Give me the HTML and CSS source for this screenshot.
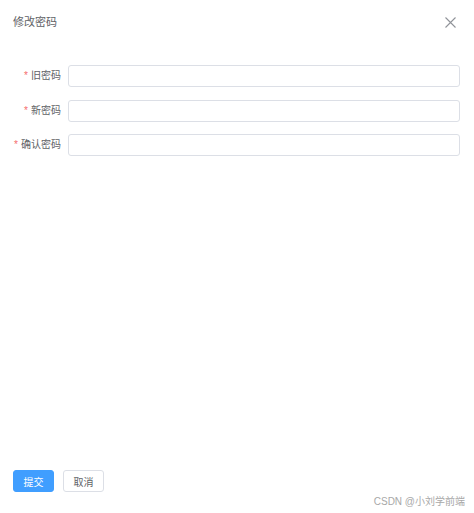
FILE: index.html
```html
<!DOCTYPE html>
<html lang="zh-CN">
<head>
<meta charset="utf-8">
<title>修改密码</title>
<link rel="stylesheet" href="styles.css">
</head>
<body>
<div class="dialog">
  <div class="header">
    <span class="title">修改密码</span>
    <button class="close" aria-label="关闭">
      <svg width="11" height="11" viewBox="0 0 11 11"><path d="M0.5 0.5L10.5 10.5M10.5 0.5L0.5 10.5" stroke="#909399" stroke-width="1.1" fill="none"/></svg>
    </button>
  </div>
  <form class="form">
    <div class="row">
      <label class="label"><span class="req">*</span>旧密码</label>
      <input class="input" type="password">
    </div>
    <div class="row">
      <label class="label"><span class="req">*</span>新密码</label>
      <input class="input" type="password">
    </div>
    <div class="row">
      <label class="label"><span class="req">*</span>确认密码</label>
      <input class="input" type="password">
    </div>
  </form>
  <div class="footer">
    <div class="buttons">
      <button class="btn primary" type="button">提交</button>
      <button class="btn" type="button">取消</button>
    </div>
    <div class="watermark">CSDN @小刘学前端</div>
  </div>
</div>
</body>
</html>
```
FILE: styles.css
```css
html, body {
  margin: 0;
  padding: 0;
  background: #ffffff;
}
body {
  font-family: "Liberation Sans", "Noto Sans CJK SC", sans-serif;
}
.dialog {
  height: 513px;
  display: flex;
  flex-direction: column;
  box-sizing: border-box;
}
.header {
  display: flex;
  justify-content: space-between;
  align-items: center;
  padding: 11px 18px 0 13px;
  height: 22px;
}
.title {
  font-size: 11px;
  line-height: 22px;
  color: #606266;
}
.close {
  border: 0;
  background: none;
  padding: 0;
  width: 11px;
  height: 11px;
  display: flex;
}
.form {
  margin: 32px 0 0 0;
  padding: 0 14px 0 0;
  display: flex;
  flex-direction: column;
  gap: 12.5px;
}
.row {
  display: flex;
  align-items: center;
  height: 22px;
}
.label {
  width: 68px;
  box-sizing: border-box;
  padding-right: 7px;
  text-align: right;
  font-size: 10px;
  color: #606266;
  line-height: 22px;
}
.req {
  color: #f56c6c;
  margin-right: 3px;
}
.input {
  flex: 1;
  height: 22px;
  box-sizing: border-box;
  border: 1px solid #dcdfe6;
  border-radius: 3px;
  margin: 0;
  padding: 0 8px;
  outline: none;
  background: #fff;
}
.footer {
  margin-top: auto;
  padding: 0 9px 5px 13px;
}
.buttons {
  display: flex;
  gap: 9px;
}
.btn {
  width: 41px;
  height: 22px;
  box-sizing: border-box;
  border: 1px solid #dcdfe6;
  border-radius: 3px;
  background: #fff;
  color: #606266;
  font-family: "Liberation Sans", "Noto Sans CJK SC", sans-serif;
  font-size: 10px;
  padding: 0;
}
.btn.primary {
  background: #409eff;
  border-color: #409eff;
  color: #fff;
}
.watermark {
  margin-top: 4px;
  text-align: right;
  font-size: 10px;
  line-height: 12px;
  color: #a8a8a8;
}
```
